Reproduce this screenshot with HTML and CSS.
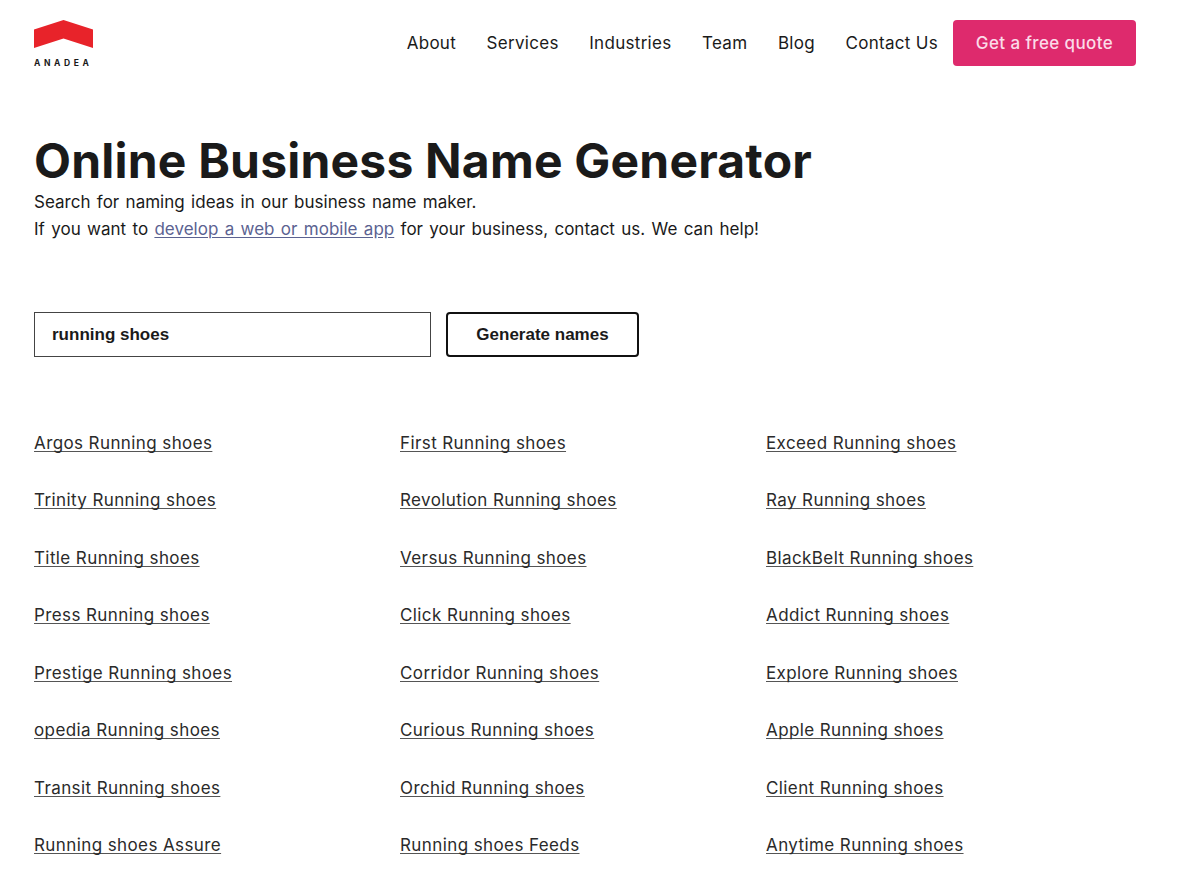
FILE: index.html
```html
<!DOCTYPE html>
<html lang="en">
<head>
<meta charset="utf-8">
<title>Online Business Name Generator</title>
<link rel="stylesheet" href="styles.css">
</head>
<body>
<header class="header">
  <a class="logo" href="#">
    <svg class="logo-mark" width="59" height="29" viewBox="0 0 59 29"><path d="M0 9.5 29.5 0 59 9.5V28L29.5 18.5 0 28Z" fill="#e8232a"/></svg>
    <span class="logo-text">ANADEA</span>
  </a>
  <nav class="nav">
    <a href="#">About</a>
    <a href="#">Services</a>
    <a href="#">Industries</a>
    <a href="#">Team</a>
    <a href="#">Blog</a>
    <a href="#">Contact Us</a>
  </nav>
  <a class="quote" href="#">Get a free quote</a>
</header>
<main class="main">
  <h1 class="title">Online Business Name Generator</h1>
  <p class="lead">Search for naming ideas in our business name maker.</p>
  <p class="lead">If you want to <a class="lead-link" href="#">develop a web or mobile app</a> for your business, contact us. We can help!</p>
  <form class="search">
    <input class="search-input" type="text" value="running shoes">
    <button class="search-button" type="button">Generate names</button>
  </form>
  <ul class="names">
    <li><a href="#">Argos Running shoes</a></li>
    <li><a href="#">First Running shoes</a></li>
    <li><a href="#">Exceed Running shoes</a></li>
    <li><a href="#">Trinity Running shoes</a></li>
    <li><a href="#">Revolution Running shoes</a></li>
    <li><a href="#">Ray Running shoes</a></li>
    <li><a href="#">Title Running shoes</a></li>
    <li><a href="#">Versus Running shoes</a></li>
    <li><a href="#">BlackBelt Running shoes</a></li>
    <li><a href="#">Press Running shoes</a></li>
    <li><a href="#">Click Running shoes</a></li>
    <li><a href="#">Addict Running shoes</a></li>
    <li><a href="#">Prestige Running shoes</a></li>
    <li><a href="#">Corridor Running shoes</a></li>
    <li><a href="#">Explore Running shoes</a></li>
    <li><a href="#">opedia Running shoes</a></li>
    <li><a href="#">Curious Running shoes</a></li>
    <li><a href="#">Apple Running shoes</a></li>
    <li><a href="#">Transit Running shoes</a></li>
    <li><a href="#">Orchid Running shoes</a></li>
    <li><a href="#">Client Running shoes</a></li>
    <li><a href="#">Running shoes Assure</a></li>
    <li><a href="#">Running shoes Feeds</a></li>
    <li><a href="#">Anytime Running shoes</a></li>
  </ul>
</main>
</body>
</html>
```
FILE: styles.css
```css
* { box-sizing: border-box; }
html, body { margin: 0; height: 100%; }
body {
  background: #fff;
  color: #1a1a1a;
  font-family: Inter, "Liberation Sans", sans-serif;
  overflow: hidden;
}
a { color: inherit; }
.header {
  display: flex;
  align-items: flex-start;
  padding: 20px 64px 0 34px;
}
.logo {
  display: flex;
  flex-direction: column;
  align-items: flex-start;
  text-decoration: none;
}
.logo-mark { display: block; }
.logo-text {
  margin-top: 10px;
  font-size: 8.5px;
  line-height: 9px;
  font-weight: 700;
  letter-spacing: 3.6px;
  color: #1a1a1a;
}
.nav {
  display: flex;
  gap: 30.5px;
  margin-left: auto;
  height: 46px;
  align-items: center;
  font-size: 17px;
  letter-spacing: 0.3px;
}
.nav a { text-decoration: none; }
.quote {
  display: flex;
  align-items: center;
  justify-content: center;
  width: 183px;
  height: 46px;
  margin-left: 15px;
  background: #de2a6d;
  border-radius: 4px;
  color: #fbdbe8;
  font-size: 17px;
  font-weight: 500;
  letter-spacing: 0.4px;
  text-decoration: none;
}
.main { padding: 0 34px; }
.title {
  margin: 62px 0 0;
  font-size: 48px;
  line-height: 62px;
  font-weight: 700;
  letter-spacing: 0.2px;
}
.lead {
  margin: 0;
  font-size: 17px;
  line-height: 27px;
  letter-spacing: 0.02px;
  word-spacing: 1.5px;
}
.lead:first-of-type { margin-top: -3px; }
.lead-link { color: #5b6291; text-underline-offset: 2px; }
.search {
  display: flex;
  gap: 15px;
  margin-top: 69px;
}
.search-input {
  width: 397px;
  height: 45px;
  padding: 0 17px;
  border: 1px solid #444;
  border-radius: 0;
  background: #fff;
  color: #1a1a1a;
  font-family: "Liberation Sans", sans-serif;
  font-size: 17px;
  font-weight: 700;
}
.search-button {
  width: 193px;
  height: 45px;
  border: 2px solid #111;
  border-radius: 4px;
  background: #fff;
  color: #1a1a1a;
  font-family: "Liberation Sans", sans-serif;
  font-size: 17px;
  font-weight: 700;
}
.names {
  display: grid;
  grid-template-columns: repeat(3, 366px);
  grid-auto-rows: 57.5px;
  margin: 57.5px 0 0;
  padding: 0;
  list-style: none;
  font-size: 17px;
  line-height: 57.5px;
  letter-spacing: 0.4px;
}
.names a {
  color: #2a2a2a;
  text-decoration-color: #555;
  text-decoration-skip-ink: none;
  text-underline-offset: 2px;
}
```
